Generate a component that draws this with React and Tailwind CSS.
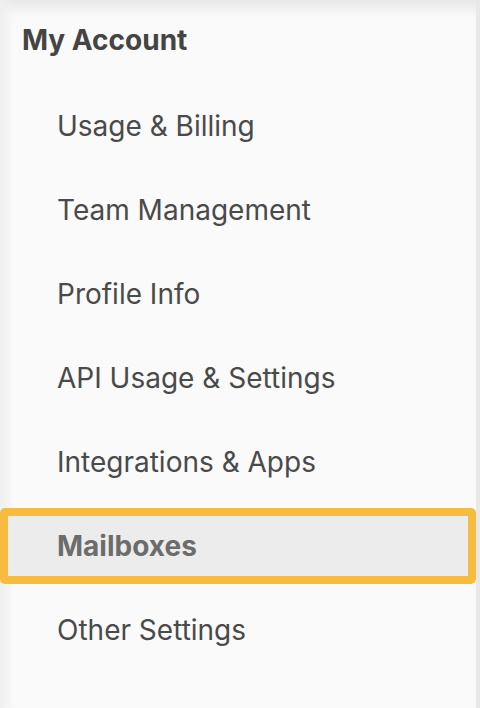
export default function App() {
  const items = [
    "Usage & Billing",
    "Team Management",
    "Profile Info",
    "API Usage & Settings",
    "Integrations & Apps",
    "Mailboxes",
    "Other Settings",
  ];
  const active = "Mailboxes";

  return (
    <div
      className="relative h-[708px] w-[480px] overflow-hidden bg-[#fafafa]"
      style={{ fontFamily: "Inter, 'Noto Sans', sans-serif" }}
    >
      {/* soft edge shading along top and left */}
      <div className="pointer-events-none absolute inset-x-0 top-0 h-[18px] bg-gradient-to-b from-[#e9e9e9] to-transparent" />
      <div className="pointer-events-none absolute inset-y-0 left-0 w-[14px] bg-gradient-to-r from-[#efefef] to-transparent" />

      <nav className="relative flex h-full w-[480px] flex-col border-r-4 border-[#e8e8e8]">
        <div className="flex h-[84px] items-center pb-[4px] pl-[22px]">
          <h2 className="text-[28px] font-bold text-[#444444]">My Account</h2>
        </div>
        <ul className="flex flex-col">
          {items.map((label) =>
            label === active ? (
              <li key={label} className="flex h-[84px] items-center">
                <div className="flex h-[76px] w-full items-center rounded-[5px] border-[8px] border-[#f6bc40] bg-[#ececec] pl-[49px]">
                  <span className="text-[28px] font-bold text-[#6c6c6c]">{label}</span>
                </div>
              </li>
            ) : (
              <li key={label} className="flex h-[84px] items-center pl-[57px]">
                <span className="text-[28px] text-[#4a4a4a]">{label}</span>
              </li>
            )
          )}
        </ul>
      </nav>
    </div>
  );
}
